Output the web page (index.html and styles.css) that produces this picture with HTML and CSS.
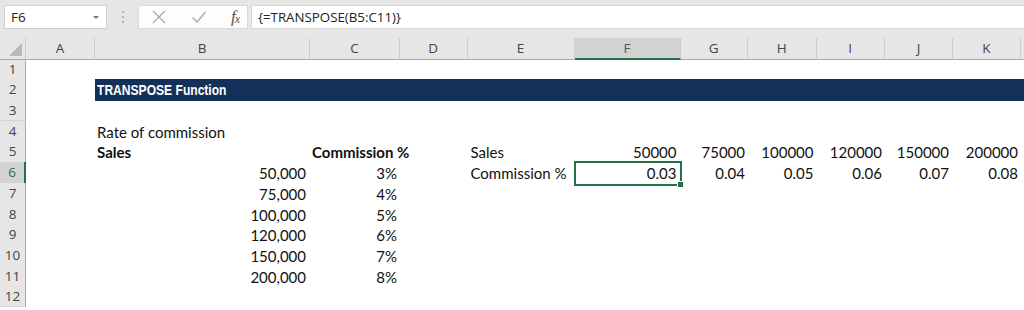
FILE: index.html
```html
<!DOCTYPE html>
<html lang="en">
<head>
  <meta charset="UTF-8">
  <title>TRANSPOSE Function</title>
  <link rel="stylesheet" href="styles.css">
</head>
<body>

<div class="barra-formula">
  <div class="cuadro-nombre">
    <span>F6</span>
    <span class="flecha"></span>
  </div>
  <div class="puntos"><i></i><i></i><i></i></div>
  <div class="botones-formula">
    <svg width="16" height="16" viewBox="0 0 16 16"><path d="M2 2 L14 14 M14 2 L2 14" stroke="#a8a8a8" stroke-width="1.2" fill="none"/></svg>
    <svg width="16" height="16" viewBox="0 0 16 16"><path d="M1.5 8.5 L6 13 L14.5 3" stroke="#a8a8a8" stroke-width="1.3" fill="none"/></svg>
    <span class="fx">f<sub>x</sub></span>
  </div>
  <div class="entrada-formula">{=TRANSPOSE(B5:C11)}</div>
</div>

<div class="hoja">
  <div class="fila encabezado">
    <div class="esquina"><span></span></div>
    <div class="hd">A</div>
    <div class="hd">B</div>
    <div class="hd">C</div>
    <div class="hd">D</div>
    <div class="hd">E</div>
    <div class="hd activo">F</div>
    <div class="hd">G</div>
    <div class="hd">H</div>
    <div class="hd">I</div>
    <div class="hd">J</div>
    <div class="hd">K</div>
    <div class="hd ultimo"></div>
  </div>

  <div class="fila"><div class="rh">1</div></div>
  <div class="fila"><div class="rh">2</div><div class="titulo"><span>TRANSPOSE Function</span></div></div>
  <div class="fila"><div class="rh">3</div></div>
  <div class="fila"><div class="rh">4</div><div class="cb">Rate of commission</div></div>
  <div class="fila">
    <div class="rh">5</div>
    <div class="cb negrita">Sales</div>
    <div class="cc negrita">Commission %</div>
    <div class="ce">Sales</div>
    <div class="cf der">50000</div>
    <div class="cg der">75000</div>
    <div class="ch der">100000</div>
    <div class="ci der">120000</div>
    <div class="cj der">150000</div>
    <div class="ck der">200000</div>
  </div>
  <div class="fila">
    <div class="rh activo">6</div>
    <div class="cb der">50,000</div>
    <div class="cc der">3%</div>
    <div class="ce">Commission %</div>
    <div class="cf der seleccion">0.03</div>
    <div class="cg der">0.04</div>
    <div class="ch der">0.05</div>
    <div class="ci der">0.06</div>
    <div class="cj der">0.07</div>
    <div class="ck der">0.08</div>
  </div>
  <div class="fila"><div class="rh">7</div><div class="cb der">75,000</div><div class="cc der">4%</div></div>
  <div class="fila"><div class="rh">8</div><div class="cb der">100,000</div><div class="cc der">5%</div></div>
  <div class="fila"><div class="rh">9</div><div class="cb der">120,000</div><div class="cc der">6%</div></div>
  <div class="fila"><div class="rh">10</div><div class="cb der">150,000</div><div class="cc der">7%</div></div>
  <div class="fila"><div class="rh">11</div><div class="cb der">200,000</div><div class="cc der">8%</div></div>
  <div class="fila"><div class="rh">12</div></div>
</div>

</body>
</html>
```

FILE: styles.css
```css
body { margin: 0; background: white; font-family: Lato, "Liberation Sans", sans-serif; }

.barra-formula {
  height: 38px; background: #e6e6e6;
  display: flex; align-items: flex-start;
  padding: 5px 0 0 4px; box-sizing: border-box;
  font-family: "Open Sans", "Noto Sans", sans-serif;
}
.cuadro-nombre {
  width: 103px; height: 24px; box-sizing: border-box;
  background: white; border: 1px solid #d0d0d0;
  display: flex; align-items: center; justify-content: space-between;
  padding: 0 7px 0 6px; font-size: 13.5px; color: #222;
}
.flecha {
  width: 0; height: 0;
  border-left: 3px solid transparent; border-right: 3px solid transparent;
  border-top: 3px solid #777;
}
.puntos {
  width: 31px; height: 24px;
  display: flex; flex-direction: column; align-items: center; justify-content: center; gap: 3px;
}
.puntos i { width: 2px; height: 2px; background: #b5b5b5; }
.botones-formula {
  width: 110px; height: 24px; box-sizing: border-box;
  background: #fdfdfd; border: 1px solid #dadada;
  display: flex; align-items: center; justify-content: space-between;
  padding: 0 8px 0 12px;
}
.fx {
  font-family: "Liberation Serif", serif; font-style: italic;
  font-size: 17px; color: #555; letter-spacing: -1px;
}
.fx sub { font-size: 12px; vertical-align: -1px; }
.entrada-formula {
  flex: 1; height: 24px; margin-left: 3px; box-sizing: border-box;
  background: white; border: 1px solid #d7d7d7; border-right: none;
  padding: 0 6px; line-height: 22px; font-size: 13.3px; color: #222;
}

.hoja { --cols: 26px 69px 215px 90px 67.5px 107px 106px 67.5px 68.5px 68.5px 68px 68px 1fr; }
.fila {
  display: grid; grid-template-columns: var(--cols);
  height: 20.73px; font-size: 15px; color: #111;
}
.fila > div { white-space: nowrap; line-height: 23px; overflow: visible; }
.encabezado { height: 20.5px; background: #e6e6e6; }
.encabezado > div {
  border-bottom: 1px solid #ababab; border-right: 1px solid #cdcdcd;
  box-sizing: border-box; text-align: center;
  font-family: "Open Sans", "Noto Sans", sans-serif; font-size: 13.5px;
  line-height: 20px; color: #444;
}
.encabezado .ultimo { border-right: none; }
.encabezado .activo {
  background: #d2d2d2; border-bottom: 2px solid #217346; color: #3a6454;
}
.esquina { position: relative; }
.esquina span {
  position: absolute; right: 3px; bottom: 3px; width: 0; height: 0;
  border-left: 13px solid transparent; border-bottom: 13px solid #b8b8b8;
}

.rh {
  grid-column: 1; background: #e6e6e6; box-sizing: border-box;
  border-right: 1px solid #ababab; border-bottom: 1px solid #d4d4d4;
  text-align: center; color: #444;
  font-family: "Open Sans", "Noto Sans", sans-serif; font-size: 13.5px;
}
.fila > .rh { line-height: 20px; }
.rh.activo { background: #d2d2d2; border-right: 2px solid #217346; color: #3a6454; }

.titulo {
  grid-column: 3 / -1; background: #13305a; color: white;
  font-family: "Liberation Sans", sans-serif;
  font-weight: bold; font-size: 15px; padding-left: 2px;
}
.fila > .titulo { line-height: 22px; }
.titulo span { display: inline-block; transform: scaleX(0.805); transform-origin: left center; }
.cb { grid-column: 3; padding: 0 4px 0 2px; }
.cc { grid-column: 4; padding: 0 3px 0 2px; }
.ce { grid-column: 6; padding: 0 3px; }
.cf { grid-column: 7; padding: 0 4px; }
.cg { grid-column: 8; padding: 0 3px; }
.ch { grid-column: 9; padding: 0 3px; }
.ci { grid-column: 10; padding: 0 3px; }
.cj { grid-column: 11; padding: 0 4px; }
.ck { grid-column: 12; padding: 0 3px; }
.der { text-align: right; }
.negrita { font-weight: bold; }

.seleccion { position: relative; }
.seleccion::before {
  content: ""; position: absolute; left: -1px; right: -1px; top: -1px; bottom: -1px;
  border: 2px solid #217346;
}
.seleccion::after {
  content: ""; position: absolute; right: -3px; bottom: -3px;
  width: 5px; height: 5px; background: #217346; border: 1px solid white;
}
```
